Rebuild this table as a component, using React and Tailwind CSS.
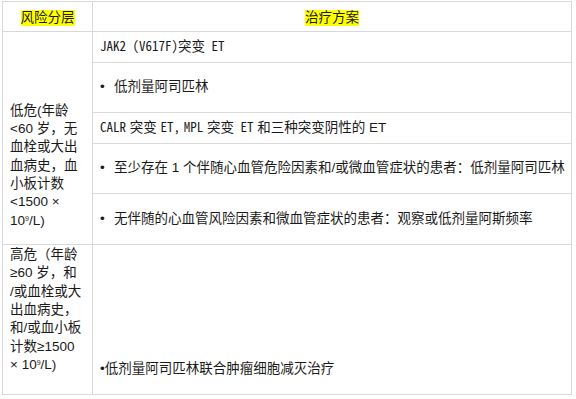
import React from "react";

const B = "border-[#d9d9d9]";

function Mono({ children }) {
  return <span className="font-['Noto_Sans_Mono_CJK_SC','Liberation_Mono',monospace] text-[13px]">{children}</span>;
}

function Bullet() {
  return <span className="inline-block w-[14px]">•</span>;
}

export default function App() {
  return (
    <div className="bg-white w-[576px] h-[399px] pt-[1px] pl-[2px]">
      <div
        className={`w-[570px] border ${B} text-[13.5px] text-[#1a1a1a] font-['Liberation_Sans','Noto_Sans_CJK_SC',sans-serif]`}
      >
        {/* header */}
        <div className={`flex h-[30px] border-b ${B}`}>
          <div className={`w-[90px] border-r ${B} flex items-center justify-center pt-[3px]`}>
            <span className="inline-block bg-[#ffff00] h-[16px] leading-[16px]">风险分层</span>
          </div>
          <div className="flex-1 flex items-center justify-center pt-[3px]">
            <span className="inline-block bg-[#ffff00] h-[16px] leading-[16px]">治疗方案</span>
          </div>
        </div>

        {/* low risk */}
        <div className={`flex border-b ${B}`}>
          <div
            className={`w-[90px] border-r ${B} flex flex-col justify-end pl-[7px] pb-[14px] leading-[18.33px] whitespace-nowrap`}
          >
            <div>低危(年龄</div>
            <div>&lt;60 岁，无</div>
            <div>血栓或大出</div>
            <div>血病史，血</div>
            <div>小板计数</div>
            <div>&lt;1500 ×</div>
            <div>
              10<sup className="text-[7px]">9</sup>/L)
            </div>
          </div>
          <div className="flex-1 flex flex-col whitespace-nowrap">
            <div className={`h-[31px] border-b ${B} flex items-center pl-[7px]`}>
              <span>
                <Mono>JAK2 (V617F)</Mono>突变<Mono>{"  ET"}</Mono>
              </span>
            </div>
            <div className={`h-[50px] border-b ${B} flex items-center pl-[7px]`}>
              <span>
                <Bullet />低剂量阿司匹林
              </span>
            </div>
            <div className={`h-[31px] border-b ${B} flex items-center pl-[7px]`}>
              <span>
                <Mono>CALR</Mono> 突变 <Mono>ET,</Mono> <Mono>MPL</Mono> 突变<Mono>{"  ET"}</Mono> 和三种突变阴性的 ET
              </span>
            </div>
            <div className={`h-[50px] border-b ${B} flex items-center pl-[7px]`}>
              <span>
                <Bullet />至少存在 1 个伴随心血管危险因素和/或微血管症状的患者：低剂量阿司匹林
              </span>
            </div>
            <div className="h-[50px] flex items-center pl-[7px]">
              <span>
                <Bullet />无伴随的心血管风险因素和微血管症状的患者：观察或低剂量阿斯频率
              </span>
            </div>
          </div>
        </div>

        {/* high risk */}
        <div className="flex h-[149px]">
          <div
            className={`w-[90px] border-r ${B} flex flex-col pl-[7px] pt-[1px] leading-[18.33px] whitespace-nowrap`}
          >
            <div>高危（年龄</div>
            <div>≥60 岁，和</div>
            <div>/或血栓或大</div>
            <div>出血病史，</div>
            <div>和/或血小板</div>
            <div>计数≥1500</div>
            <div>
              × 10<sup className="text-[7px]">9</sup>/L)
            </div>
          </div>
          <div className="flex-1 flex items-end pl-[7px] pb-[16px] leading-[18.33px] whitespace-nowrap">
            <span>•低剂量阿司匹林联合肿瘤细胞减灭治疗</span>
          </div>
        </div>
      </div>
    </div>
  );
}
